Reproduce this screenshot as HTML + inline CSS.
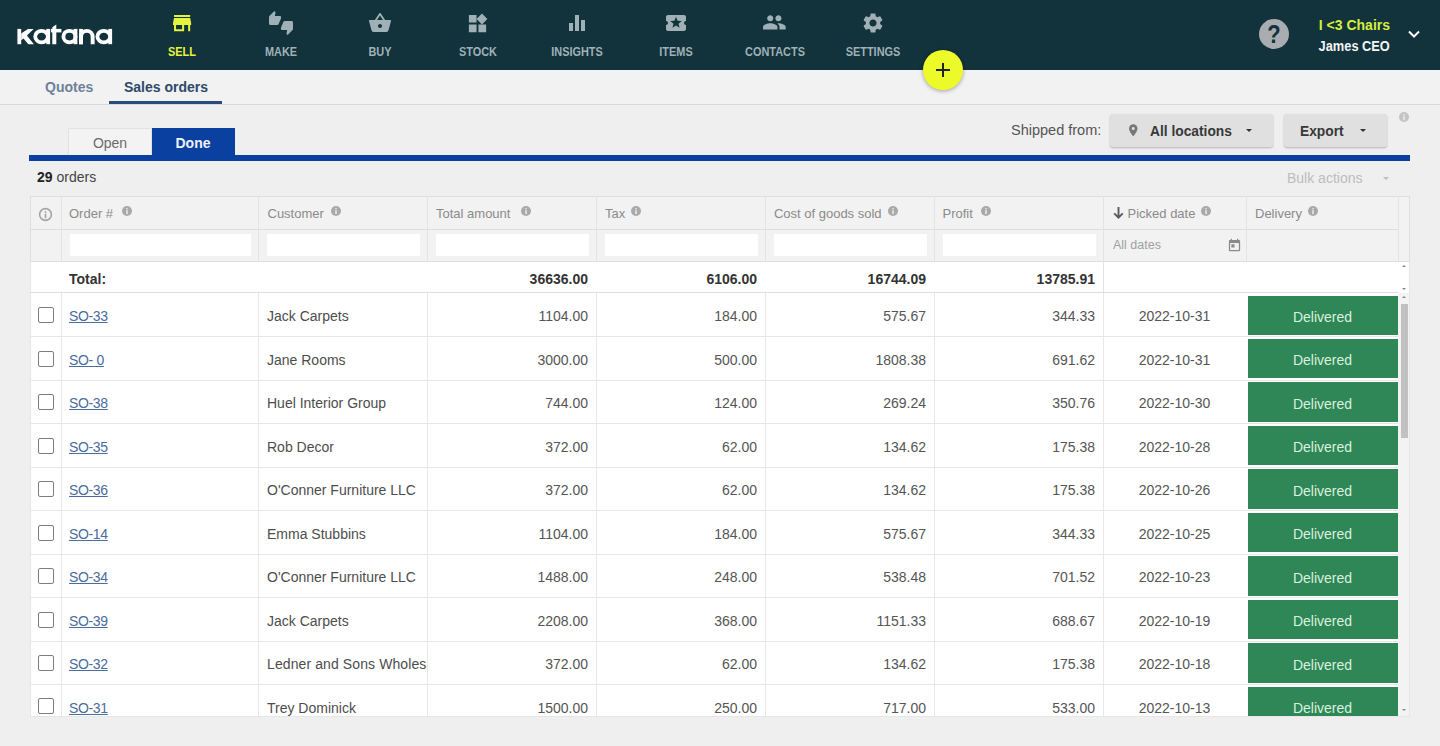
<!DOCTYPE html><html><head><meta charset="utf-8"><style>
*{box-sizing:border-box;margin:0;padding:0}
html,body{width:1440px;height:746px;overflow:hidden;background:#efefef;font-family:"Liberation Sans",sans-serif;position:relative}
.a{position:absolute;white-space:nowrap}
.ic{position:absolute;display:block}
#nav{position:absolute;left:0;top:0;width:1440px;height:70px;background:#12323c}
.nl{position:absolute;top:44.5px;font-size:12px;font-weight:bold;color:#9fb1b6;transform:translateX(-50%) scaleX(0.91);line-height:14px}
</style></head><body>

<div id="nav">
<svg class="ic" style="left:0;top:0;width:120px;height:70px" viewBox="0 0 120 70"><g fill="#fff">
<rect x="17.4" y="28.9" width="3.8" height="15.3"/>
<polygon points="21.2,33.6 27.9,28.9 33.6,28.9 26.9,35.4 33.9,44.2 28.3,44.2 23.5,38.4 21.2,40.2"/>
<polygon points="52.3,27.2 56.3,24.4 56.3,44.2 52.3,44.2"/>
<rect x="50.9" y="28.9" width="10.5" height="3.5"/>
<rect x="79.1" y="28.9" width="3.8" height="15.3"/>
<path d="M79.1 44.2V36.65a7.75 7.75 0 0 1 15.5 0V44.2h-3.9V36.65a3.85 3.85 0 0 0 -7.7 0V44.2z"/>
</g><g fill="none" stroke="#fff" stroke-width="3.8">
<ellipse cx="41.55" cy="36.55" rx="6.35" ry="5.75"/>
<ellipse cx="69.45" cy="36.55" rx="6.05" ry="5.75"/>
<ellipse cx="103.8" cy="36.55" rx="6.4" ry="5.75"/>
</g><g fill="#fff">
<rect x="46.3" y="28.9" width="3.8" height="15.3"/>
<rect x="73.6" y="28.9" width="3.8" height="15.3"/>
<rect x="108.3" y="28.9" width="3.8" height="15.3"/>
</g></svg>
<svg class="ic" style="left:169.8px;top:11px;width:24.2px;height:24.2px" viewBox="0 0 24 24"><path fill="#e4f43c" d="M20 4H4v2h16V4zm1 10v-2l-1-5H4l-1 5v2h1v6h10v-6h4v6h2v-6h1zm-9 4H6v-4h6v4z"/></svg>
<div class="a nl" style="left:181.9px;color:#e4f43c">SELL</div>
<svg class="ic" style="left:268.5px;top:11px;width:24px;height:24px" viewBox="0 0 24 24"><path fill="#9fb1b6" d="M12 6c0-.55-.45-1-1-1H5.82l.66-3.18.02-.23c0-.31-.13-.59-.33-.8L5.38 0 .44 4.94C.17 5.21 0 5.590 0 6v6.5c0 .83.67 1.5 1.5 1.5h6.75c.62 0 1.150-.38 1.38-.91l2.26-5.29c.07-.17.11-.36.11-.55V6zm10.5 4h-6.75c-.62 0-1.15.38-1.38.91l-2.26 5.29c-.07.17-.11.36-.11.55V18c0 .55.45 1 1 1h5.18l-.66 3.18-.02.24c0 .31.13.59.33.8l.79.78 4.94-4.94c.27-.27.44-.65.44-1.06v-6.5c0-.83-.67-1.5-1.5-1.5z"/></svg>
<div class="a nl" style="left:280.6px;color:#9fb1b6">MAKE</div>
<svg class="ic" style="left:367.5px;top:11px;width:24px;height:24px" viewBox="0 0 24 24"><path fill="#9fb1b6" d="M17.21 9l-4.38-6.56c-.19-.28-.51-.42-.83-.42-.32 0-.64.14-.83.43L6.79 9H2c-.55 0-1 .45-1 1 0 .09.01.18.04.27l2.54 9.27c.23.84 1 1.46 1.920 1.46h13c.92 0 1.69-.62 1.93-1.46l2.54-9.27L23 10c0-.55-.45-1-1-1h-4.79zM9 9l3-4.4L15 9H9zm3 8c-1.1 0-2-.9-2-2s.9-2 2-2 2 .9 2 2-.9 2-2 2z"/></svg>
<div class="a nl" style="left:379.5px;color:#9fb1b6">BUY</div>
<svg class="ic" style="left:466px;top:12.4px;width:23px;height:23px" viewBox="0 0 24 24"><path fill="#9fb1b6" d="M13 13v8h8v-8h-8zM3 21h8v-8H3v8zM3 3v8h8V3H3zm13.66-1.31L11 7.34 16.66 13l5.65-5.65-5.65-5.66z"/></svg>
<div class="a nl" style="left:478.2px;color:#9fb1b6">STOCK</div>
<div class="a" style="left:569px;top:22.7px;width:4px;height:8.2px;background:#9fb1b6"></div>
<div class="a" style="left:575px;top:15px;width:4.2px;height:15.9px;background:#9fb1b6"></div>
<div class="a" style="left:581px;top:19.9px;width:4px;height:11px;background:#9fb1b6"></div>
<div class="a nl" style="left:576.7px;color:#9fb1b6">INSIGHTS</div>
<svg class="ic" style="left:663.7px;top:11px;width:24px;height:24px" viewBox="0 0 24 24"><path fill="#9fb1b6" d="M20 12c0-1.1.9-2 2-2V6c0-1.1-.9-2-2-2H4c-1.1 0-1.99.9-1.99 2v4c1.1 0 1.99.9 1.99 2s-.89 2-2 2v4c0 1.1.9 2 2 2h16c1.1 0 2-.9 2-2v-4c-1.1 0-2-.9-2-2zm-4.42 4.8L12 14.5l-3.58 2.3 1.08-4.12-3.29-2.690 4.24-.25L12 5.8l1.54 3.950 4.24.25-3.29 2.690 1.09 4.110z"/></svg>
<div class="a nl" style="left:675.6px;color:#9fb1b6">ITEMS</div>
<svg class="ic" style="left:761.9px;top:10.3px;width:24.7px;height:24.7px" viewBox="0 0 24 24"><path fill="#9fb1b6" d="M16 11c1.66 0 2.99-1.34 2.99-3S17.66 5 16 5c-1.66 0-3 1.34-3 3s1.34 3 3 3zm-8 0c1.66 0 2.99-1.34 2.99-3S9.66 5 8 5C6.34 5 5 6.34 5 8s1.34 3 3 3zm0 2c-2.33 0-7 1.17-7 3.5V19h14v-2.5c0-2.33-4.67-3.5-7-3.5zm8 0c-.29 0-.62.02-.97.05 1.16.84 1.97 1.97 1.97 3.45V19h6v-2.5c0-2.33-4.67-3.5-7-3.5z"/></svg>
<div class="a nl" style="left:774.5px;color:#9fb1b6">CONTACTS</div>
<svg class="ic" style="left:861px;top:10.6px;width:24px;height:24px" viewBox="0 0 24 24"><path fill="#9fb1b6" d="M19.14 12.94c.04-.3.06-.61.06-.94 0-.32-.02-.64-.07-.94l2.03-1.58c.18-.14.23-.41.12-.61l-1.92-3.32c-.12-.22-.37-.29-.59-.22l-2.39.96c-.5-.38-1.03-.7-1.62-.94l-.36-2.54c-.04-.24-.24-.41-.48-.41h-3.84c-.24 0-.43.17-.47.41l-.36 2.54c-.59.24-1.13.57-1.62.94l-2.39-.96c-.22-.08-.47 0-.59.22L2.74 8.87c-.12.21-.08.47.12.61l2.03 1.58c-.05.3-.09.63-.09.94s.02.64.07.94l-2.030 1.58c-.18.14-.23.41-.12.61l1.92 3.32c.12.22.37.29.59.22l2.39-.96c.5.38 1.03.7 1.62.94l.36 2.54c.05.24.24.41.48.41h3.84c.24 0 .44-.17.47-.41l.36-2.54c.59-.24 1.13-.56 1.62-.94l2.39.96c.22.08.47 0 .59-.22l1.92-3.32c.12-.22.07-.47-.12-.61l-2.01-1.58zM12 15.6c-1.98 0-3.6-1.62-3.6-3.6s1.62-3.6 3.6-3.6 3.6 1.62 3.6 3.6-1.62 3.6-3.6 3.6z"/></svg>
<div class="a nl" style="left:872.75px;color:#9fb1b6">SETTINGS</div>
<div class="a" style="left:1259px;top:19px;width:30px;height:30px;border-radius:50%;background:#a9acb0"></div>
<div class="a" style="left:1259px;top:19px;width:30px;height:30px;text-align:center;font-size:26px;font-weight:bold;line-height:31px;color:#12323c;transform:scaleX(0.84)">?</div>
<div class="a" style="right:50px;top:16px;font-size:14px;font-weight:bold;color:#d7ee3e;line-height:18px;text-align:right">I &lt;3 Chairs</div>
<div class="a" style="right:50px;top:37px;font-size:14px;font-weight:bold;color:#f2f5f5;line-height:18px;text-align:right;transform:scaleX(0.915);transform-origin:100% 50%">James CEO</div>
<svg class="ic" style="left:1406px;top:28px;width:16px;height:12px" viewBox="0 0 16 12"><path d="M3 3.5L8 8.5L13 3.5" fill="none" stroke="#fff" stroke-width="2"/></svg>
</div>
<div class="a" style="left:0;top:70px;width:1440px;height:35px;background:#f2f2f2;border-bottom:1px solid #d9d9d9"></div>
<div class="a" style="left:45px;top:78px;font-size:14px;font-weight:bold;color:#6d8199;line-height:18px">Quotes</div>
<div class="a" style="left:124px;top:78px;font-size:14px;font-weight:bold;color:#2d4869;line-height:18px">Sales orders</div>
<div class="a" style="left:109px;top:101px;width:113px;height:2.5px;background:#2b4a7e"></div>
<div class="a" style="left:922.5px;top:50px;width:40px;height:40px;border-radius:50%;background:#ecfa2a;box-shadow:0 1px 4px rgba(0,0,0,.35)"></div>
<div class="a" style="left:936px;top:69.2px;width:14px;height:1.8px;background:#222"></div>
<div class="a" style="left:942.1px;top:63.3px;width:1.8px;height:14px;background:#222"></div>
<div class="a" style="left:68px;top:128px;width:84px;height:27px;background:#f3f3f3;border:1px solid #e2e2e2;border-bottom:none"></div>
<div class="a" style="left:68px;top:134px;width:84px;text-align:center;font-size:14px;color:#6b6b6b;line-height:18px">Open</div>
<div class="a" style="left:151.5px;top:128px;width:83px;height:27px;background:#0a40a0"></div>
<div class="a" style="left:151.5px;top:134px;width:83px;text-align:center;font-size:14px;font-weight:bold;color:#eef2fa;line-height:18px">Done</div>
<div class="a" style="left:29px;top:155px;width:1381px;height:5.5px;background:#0a40a0"></div>
<div class="a" style="left:1011px;top:121px;font-size:14.5px;color:#555;line-height:18px">Shipped from:</div>
<div class="a" style="left:1110px;top:114px;width:163px;height:33px;background:#e0e0e0;border-radius:3px;box-shadow:0 1px 2px rgba(0,0,0,.25)"></div>
<svg class="ic" style="left:1126px;top:122.5px;width:14.5px;height:14.5px" viewBox="0 0 24 24"><path fill="#777" d="M12 2C8.13 2 5 5.13 5 9c0 5.25 7 13 7 13s7-7.75 7-13c0-3.87-3.13-7-7-7zm0 9.5c-1.38 0-2.5-1.12-2.5-2.5s1.12-2.5 2.5-2.5 2.5 1.12 2.5 2.5-1.12 2.5-2.5 2.5z"/></svg>
<div class="a" style="left:1150px;top:122px;font-size:14.5px;font-weight:bold;color:#383838;line-height:18px;transform:scaleX(0.95);transform-origin:0 50%">All locations</div>
<div class="a" style="left:1245.5px;top:128.5px;width:0;height:0;border-left:3.5px solid transparent;border-right:3.5px solid transparent;border-top:3.5px solid #333"></div>
<div class="a" style="left:1284px;top:114px;width:103px;height:33px;background:#e0e0e0;border-radius:3px;box-shadow:0 1px 2px rgba(0,0,0,.25)"></div>
<div class="a" style="left:1300px;top:122px;font-size:14.5px;font-weight:bold;color:#383838;line-height:18px;transform:scaleX(0.95);transform-origin:0 50%">Export</div>
<div class="a" style="left:1359.5px;top:128.5px;width:0;height:0;border-left:3.5px solid transparent;border-right:3.5px solid transparent;border-top:3.5px solid #333"></div>
<svg class="ic" style="left:1399px;top:111.5px;width:10px;height:10px" viewBox="0 0 10 10"><circle cx="5" cy="5" r="5" fill="#c4c4c4"/><circle cx="5" cy="2.8" r="0.8" fill="#f0f0f0"/><rect x="4.3" y="4.2" width="1.4" height="3.9" fill="#f0f0f0"/></svg>
<div class="a" style="left:37px;top:168px;font-size:14px;color:#444;line-height:18px"><b style="color:#222">29</b> orders</div>
<div class="a" style="left:1287px;top:169px;font-size:14px;color:#bdbdbd;line-height:18px">Bulk actions</div>
<div class="a" style="left:1383px;top:177px;width:0;height:0;border-left:3.5px solid transparent;border-right:3.5px solid transparent;border-top:3.5px solid #bdbdbd"></div>
<div class="a" style="left:30px;top:196px;width:1380px;height:520.5px;background:#fff;border:1px solid #e6e6e6"></div>
<div class="a" style="left:30px;top:196px;width:1380px;height:65px;background:#f2f2f2;border:1px solid #dedede;border-bottom:none"></div>
<div class="a" style="left:30px;top:229px;width:1368px;height:1px;background:#dedede"></div>
<div class="a" style="left:30px;top:260.5px;width:1380px;height:1.5px;background:#dedede"></div>
<div class="a" style="left:30px;top:292px;width:1368px;height:1px;background:#dedede"></div>
<div class="a" style="left:60.5px;top:196px;width:1px;height:65px;background:#e3e3e3"></div>
<div class="a" style="left:257.5px;top:196px;width:1px;height:65px;background:#e3e3e3"></div>
<div class="a" style="left:426.5px;top:196px;width:1px;height:65px;background:#e3e3e3"></div>
<div class="a" style="left:595.5px;top:196px;width:1px;height:65px;background:#e3e3e3"></div>
<div class="a" style="left:764.5px;top:196px;width:1px;height:65px;background:#e3e3e3"></div>
<div class="a" style="left:933.5px;top:196px;width:1px;height:65px;background:#e3e3e3"></div>
<div class="a" style="left:1102.5px;top:196px;width:1px;height:65px;background:#e3e3e3"></div>
<div class="a" style="left:1245.5px;top:196px;width:1px;height:65px;background:#e3e3e3"></div>
<div class="a" style="left:1397.5px;top:196px;width:1px;height:65px;background:#e3e3e3"></div>
<svg class="ic" style="left:38px;top:207px;width:15px;height:15px" viewBox="0 0 15 15"><circle cx="7.5" cy="7.5" r="5.9" fill="none" stroke="#a5a5a5" stroke-width="1.6"/><circle cx="7.5" cy="4.9" r="0.95" fill="#a5a5a5"/><rect x="6.7" y="6.6" width="1.6" height="4.6" fill="#a5a5a5"/></svg>
<div class="a" style="left:69px;top:204.5px;font-size:13px;color:#8a8a8a;line-height:17px">Order #</div>
<svg class="ic" style="left:121.9px;top:205.5px;width:10px;height:10px" viewBox="0 0 10 10"><circle cx="5" cy="5" r="5" fill="#a9a9a9"/><circle cx="5" cy="2.8" r="0.8" fill="#f2f2f2"/><rect x="4.3" y="4.2" width="1.4" height="3.9" fill="#f2f2f2"/></svg>
<div class="a" style="left:267.5px;top:204.5px;font-size:13px;color:#8a8a8a;line-height:17px">Customer</div>
<svg class="ic" style="left:330.5px;top:205.5px;width:10px;height:10px" viewBox="0 0 10 10"><circle cx="5" cy="5" r="5" fill="#a9a9a9"/><circle cx="5" cy="2.8" r="0.8" fill="#f2f2f2"/><rect x="4.3" y="4.2" width="1.4" height="3.9" fill="#f2f2f2"/></svg>
<div class="a" style="left:436px;top:204.5px;font-size:13px;color:#8a8a8a;line-height:17px">Total amount</div>
<svg class="ic" style="left:520.8px;top:205.5px;width:10px;height:10px" viewBox="0 0 10 10"><circle cx="5" cy="5" r="5" fill="#a9a9a9"/><circle cx="5" cy="2.8" r="0.8" fill="#f2f2f2"/><rect x="4.3" y="4.2" width="1.4" height="3.9" fill="#f2f2f2"/></svg>
<div class="a" style="left:605px;top:204.5px;font-size:13px;color:#8a8a8a;line-height:17px">Tax</div>
<svg class="ic" style="left:630.5px;top:205.5px;width:10px;height:10px" viewBox="0 0 10 10"><circle cx="5" cy="5" r="5" fill="#a9a9a9"/><circle cx="5" cy="2.8" r="0.8" fill="#f2f2f2"/><rect x="4.3" y="4.2" width="1.4" height="3.9" fill="#f2f2f2"/></svg>
<div class="a" style="left:773.9px;top:204.5px;font-size:13px;color:#8a8a8a;line-height:17px">Cost of goods sold</div>
<svg class="ic" style="left:888.4px;top:205.5px;width:10px;height:10px" viewBox="0 0 10 10"><circle cx="5" cy="5" r="5" fill="#a9a9a9"/><circle cx="5" cy="2.8" r="0.8" fill="#f2f2f2"/><rect x="4.3" y="4.2" width="1.4" height="3.9" fill="#f2f2f2"/></svg>
<div class="a" style="left:942.5px;top:204.5px;font-size:13px;color:#8a8a8a;line-height:17px">Profit</div>
<svg class="ic" style="left:980.5px;top:205.5px;width:10px;height:10px" viewBox="0 0 10 10"><circle cx="5" cy="5" r="5" fill="#a9a9a9"/><circle cx="5" cy="2.8" r="0.8" fill="#f2f2f2"/><rect x="4.3" y="4.2" width="1.4" height="3.9" fill="#f2f2f2"/></svg>
<div class="a" style="left:1127.5px;top:204.5px;font-size:13px;color:#8a8a8a;line-height:17px">Picked date</div>
<svg class="ic" style="left:1201px;top:205.5px;width:10px;height:10px" viewBox="0 0 10 10"><circle cx="5" cy="5" r="5" fill="#a9a9a9"/><circle cx="5" cy="2.8" r="0.8" fill="#f2f2f2"/><rect x="4.3" y="4.2" width="1.4" height="3.9" fill="#f2f2f2"/></svg>
<div class="a" style="left:1255px;top:204.5px;font-size:13px;color:#8a8a8a;line-height:17px">Delivery</div>
<svg class="ic" style="left:1307.5px;top:205.5px;width:10px;height:10px" viewBox="0 0 10 10"><circle cx="5" cy="5" r="5" fill="#a9a9a9"/><circle cx="5" cy="2.8" r="0.8" fill="#f2f2f2"/><rect x="4.3" y="4.2" width="1.4" height="3.9" fill="#f2f2f2"/></svg>
<svg class="ic" style="left:1113px;top:206px;width:11px;height:13px" viewBox="0 0 11 13"><path d="M5.5 1V11.5M1.2 7.3L5.5 11.6L9.8 7.3" fill="none" stroke="#5a5a5a" stroke-width="1.9"/></svg>
<div class="a" style="left:69.5px;top:234px;width:181px;height:22px;background:#fff"></div>
<div class="a" style="left:266.5px;top:234px;width:153px;height:22px;background:#fff"></div>
<div class="a" style="left:435.5px;top:234px;width:153px;height:22px;background:#fff"></div>
<div class="a" style="left:604.5px;top:234px;width:153px;height:22px;background:#fff"></div>
<div class="a" style="left:773.5px;top:234px;width:153px;height:22px;background:#fff"></div>
<div class="a" style="left:942.5px;top:234px;width:153px;height:22px;background:#fff"></div>
<div class="a" style="left:1113px;top:237px;font-size:12.5px;color:#a0a0a0;line-height:17px">All dates</div>
<svg class="ic" style="left:1227px;top:237.5px;width:15px;height:15px" viewBox="0 0 24 24"><path fill="#8a8a8a" d="M19 3h-1V1h-2v2H8V1H6v2H5c-1.11 0-1.99.9-1.99 2L3 19c0 1.1.89 2 2 2h14c1.1 0 2-.9 2-2V5c0-1.1-.9-2-2-2zm0 16H5V8h14v11zM7 10h5v5H7z"/></svg>
<div class="a" style="left:1102.5px;top:261px;width:1px;height:31px;background:#e3e3e3"></div>
<div class="a" style="left:69px;top:270px;font-size:14px;font-weight:bold;color:#333;line-height:18px">Total:</div>
<div class="a" style="right:852px;top:270px;font-size:14px;font-weight:bold;color:#333;line-height:18px;text-align:right">36636.00</div>
<div class="a" style="right:683px;top:270px;font-size:14px;font-weight:bold;color:#333;line-height:18px;text-align:right">6106.00</div>
<div class="a" style="right:514px;top:270px;font-size:14px;font-weight:bold;color:#333;line-height:18px;text-align:right">16744.09</div>
<div class="a" style="right:345px;top:270px;font-size:14px;font-weight:bold;color:#333;line-height:18px;text-align:right">13785.91</div>
<div class="a" style="left:1402px;top:265px;width:0;height:0;border-left:2px solid transparent;border-right:2px solid transparent;border-bottom:2.5px solid #888"></div>
<div class="a" style="left:1402px;top:287.5px;width:0;height:0;border-left:2px solid transparent;border-right:2px solid transparent;border-top:2.5px solid #888"></div>
<div class="a" style="left:1398px;top:293.0px;width:11px;height:422.5px;background:#f3f3f3"></div>
<div class="a" style="left:1400.5px;top:303.7px;width:7.8px;height:134.5px;background:#c1c1c1"></div>
<div class="a" style="left:1402px;top:295.5px;width:0;height:0;border-left:2px solid transparent;border-right:2px solid transparent;border-bottom:2.5px solid #888"></div>
<div class="a" style="left:1402px;top:708.5px;width:0;height:0;border-left:2px solid transparent;border-right:2px solid transparent;border-top:2.5px solid #888"></div>
<div id="body" class="a" style="left:31px;top:293.0px;width:1367px;height:422.5px;overflow:hidden">
<div class="a" style="left:0;top:43.410000000000004px;width:1367px;height:1px;background:#e6e6e6"></div>
<div class="a" style="left:29.5px;top:0.45px;width:1px;height:43.46px;background:#e8e8e8"></div>
<div class="a" style="left:226.5px;top:0.45px;width:1px;height:43.46px;background:#e8e8e8"></div>
<div class="a" style="left:395.5px;top:0.45px;width:1px;height:43.46px;background:#e8e8e8"></div>
<div class="a" style="left:564.5px;top:0.45px;width:1px;height:43.46px;background:#e8e8e8"></div>
<div class="a" style="left:733.5px;top:0.45px;width:1px;height:43.46px;background:#e8e8e8"></div>
<div class="a" style="left:902.5px;top:0.45px;width:1px;height:43.46px;background:#e8e8e8"></div>
<div class="a" style="left:1071.5px;top:0.45px;width:1px;height:43.46px;background:#e8e8e8"></div>
<div class="a" style="left:7px;top:14.35px;width:16px;height:16px;border:1.9px solid #7d7d7d;border-radius:2px"></div>
<div class="a" style="left:38px;top:14.45px;font-size:14px;color:#4b6c9c;text-decoration:underline;line-height:18px;letter-spacing:-0.35px">SO-33</div>
<div class="a" style="left:236px;top:14.45px;width:160px;overflow:hidden;font-size:14px;color:#4d4d4d;line-height:18px;">Jack Carpets</div>
<div class="a" style="right:810px;top:14.45px;font-size:14px;color:#555;line-height:18px;text-align:right">1104.00</div>
<div class="a" style="right:641px;top:14.45px;font-size:14px;color:#555;line-height:18px;text-align:right">184.00</div>
<div class="a" style="right:472px;top:14.45px;font-size:14px;color:#555;line-height:18px;text-align:right">575.67</div>
<div class="a" style="right:303px;top:14.45px;font-size:14px;color:#555;line-height:18px;text-align:right">344.33</div>
<div class="a" style="left:1072px;top:14.45px;width:143px;text-align:center;font-size:14px;color:#555;line-height:18px">2022-10-31</div>
<div class="a" style="left:1216.5px;top:2.5500000000000003px;width:150px;height:39.4px;background:#2f8657"></div>
<div class="a" style="left:1216.5px;top:14.95px;width:150px;text-align:center;font-size:14px;color:#d9f2df;line-height:18px">Delivered</div>
<div class="a" style="left:0;top:86.87px;width:1367px;height:1px;background:#e6e6e6"></div>
<div class="a" style="left:29.5px;top:43.910000000000004px;width:1px;height:43.46px;background:#e8e8e8"></div>
<div class="a" style="left:226.5px;top:43.910000000000004px;width:1px;height:43.46px;background:#e8e8e8"></div>
<div class="a" style="left:395.5px;top:43.910000000000004px;width:1px;height:43.46px;background:#e8e8e8"></div>
<div class="a" style="left:564.5px;top:43.910000000000004px;width:1px;height:43.46px;background:#e8e8e8"></div>
<div class="a" style="left:733.5px;top:43.910000000000004px;width:1px;height:43.46px;background:#e8e8e8"></div>
<div class="a" style="left:902.5px;top:43.910000000000004px;width:1px;height:43.46px;background:#e8e8e8"></div>
<div class="a" style="left:1071.5px;top:43.910000000000004px;width:1px;height:43.46px;background:#e8e8e8"></div>
<div class="a" style="left:7px;top:57.81px;width:16px;height:16px;border:1.9px solid #7d7d7d;border-radius:2px"></div>
<div class="a" style="left:38px;top:57.910000000000004px;font-size:14px;color:#4b6c9c;text-decoration:underline;line-height:18px;letter-spacing:-0.35px">SO- 0</div>
<div class="a" style="left:236px;top:57.910000000000004px;width:160px;overflow:hidden;font-size:14px;color:#4d4d4d;line-height:18px;">Jane Rooms</div>
<div class="a" style="right:810px;top:57.910000000000004px;font-size:14px;color:#555;line-height:18px;text-align:right">3000.00</div>
<div class="a" style="right:641px;top:57.910000000000004px;font-size:14px;color:#555;line-height:18px;text-align:right">500.00</div>
<div class="a" style="right:472px;top:57.910000000000004px;font-size:14px;color:#555;line-height:18px;text-align:right">1808.38</div>
<div class="a" style="right:303px;top:57.910000000000004px;font-size:14px;color:#555;line-height:18px;text-align:right">691.62</div>
<div class="a" style="left:1072px;top:57.910000000000004px;width:143px;text-align:center;font-size:14px;color:#555;line-height:18px">2022-10-31</div>
<div class="a" style="left:1216.5px;top:46.010000000000005px;width:150px;height:39.4px;background:#2f8657"></div>
<div class="a" style="left:1216.5px;top:58.410000000000004px;width:150px;text-align:center;font-size:14px;color:#d9f2df;line-height:18px">Delivered</div>
<div class="a" style="left:0;top:130.33px;width:1367px;height:1px;background:#e6e6e6"></div>
<div class="a" style="left:29.5px;top:87.37px;width:1px;height:43.46px;background:#e8e8e8"></div>
<div class="a" style="left:226.5px;top:87.37px;width:1px;height:43.46px;background:#e8e8e8"></div>
<div class="a" style="left:395.5px;top:87.37px;width:1px;height:43.46px;background:#e8e8e8"></div>
<div class="a" style="left:564.5px;top:87.37px;width:1px;height:43.46px;background:#e8e8e8"></div>
<div class="a" style="left:733.5px;top:87.37px;width:1px;height:43.46px;background:#e8e8e8"></div>
<div class="a" style="left:902.5px;top:87.37px;width:1px;height:43.46px;background:#e8e8e8"></div>
<div class="a" style="left:1071.5px;top:87.37px;width:1px;height:43.46px;background:#e8e8e8"></div>
<div class="a" style="left:7px;top:101.27000000000001px;width:16px;height:16px;border:1.9px solid #7d7d7d;border-radius:2px"></div>
<div class="a" style="left:38px;top:101.37px;font-size:14px;color:#4b6c9c;text-decoration:underline;line-height:18px;letter-spacing:-0.35px">SO-38</div>
<div class="a" style="left:236px;top:101.37px;width:160px;overflow:hidden;font-size:14px;color:#4d4d4d;line-height:18px;">Huel Interior Group</div>
<div class="a" style="right:810px;top:101.37px;font-size:14px;color:#555;line-height:18px;text-align:right">744.00</div>
<div class="a" style="right:641px;top:101.37px;font-size:14px;color:#555;line-height:18px;text-align:right">124.00</div>
<div class="a" style="right:472px;top:101.37px;font-size:14px;color:#555;line-height:18px;text-align:right">269.24</div>
<div class="a" style="right:303px;top:101.37px;font-size:14px;color:#555;line-height:18px;text-align:right">350.76</div>
<div class="a" style="left:1072px;top:101.37px;width:143px;text-align:center;font-size:14px;color:#555;line-height:18px">2022-10-30</div>
<div class="a" style="left:1216.5px;top:89.47px;width:150px;height:39.4px;background:#2f8657"></div>
<div class="a" style="left:1216.5px;top:101.87px;width:150px;text-align:center;font-size:14px;color:#d9f2df;line-height:18px">Delivered</div>
<div class="a" style="left:0;top:173.79px;width:1367px;height:1px;background:#e6e6e6"></div>
<div class="a" style="left:29.5px;top:130.82999999999998px;width:1px;height:43.46px;background:#e8e8e8"></div>
<div class="a" style="left:226.5px;top:130.82999999999998px;width:1px;height:43.46px;background:#e8e8e8"></div>
<div class="a" style="left:395.5px;top:130.82999999999998px;width:1px;height:43.46px;background:#e8e8e8"></div>
<div class="a" style="left:564.5px;top:130.82999999999998px;width:1px;height:43.46px;background:#e8e8e8"></div>
<div class="a" style="left:733.5px;top:130.82999999999998px;width:1px;height:43.46px;background:#e8e8e8"></div>
<div class="a" style="left:902.5px;top:130.82999999999998px;width:1px;height:43.46px;background:#e8e8e8"></div>
<div class="a" style="left:1071.5px;top:130.82999999999998px;width:1px;height:43.46px;background:#e8e8e8"></div>
<div class="a" style="left:7px;top:144.73px;width:16px;height:16px;border:1.9px solid #7d7d7d;border-radius:2px"></div>
<div class="a" style="left:38px;top:144.82999999999998px;font-size:14px;color:#4b6c9c;text-decoration:underline;line-height:18px;letter-spacing:-0.35px">SO-35</div>
<div class="a" style="left:236px;top:144.82999999999998px;width:160px;overflow:hidden;font-size:14px;color:#4d4d4d;line-height:18px;">Rob Decor</div>
<div class="a" style="right:810px;top:144.82999999999998px;font-size:14px;color:#555;line-height:18px;text-align:right">372.00</div>
<div class="a" style="right:641px;top:144.82999999999998px;font-size:14px;color:#555;line-height:18px;text-align:right">62.00</div>
<div class="a" style="right:472px;top:144.82999999999998px;font-size:14px;color:#555;line-height:18px;text-align:right">134.62</div>
<div class="a" style="right:303px;top:144.82999999999998px;font-size:14px;color:#555;line-height:18px;text-align:right">175.38</div>
<div class="a" style="left:1072px;top:144.82999999999998px;width:143px;text-align:center;font-size:14px;color:#555;line-height:18px">2022-10-28</div>
<div class="a" style="left:1216.5px;top:132.92999999999998px;width:150px;height:39.4px;background:#2f8657"></div>
<div class="a" style="left:1216.5px;top:145.32999999999998px;width:150px;text-align:center;font-size:14px;color:#d9f2df;line-height:18px">Delivered</div>
<div class="a" style="left:0;top:217.25px;width:1367px;height:1px;background:#e6e6e6"></div>
<div class="a" style="left:29.5px;top:174.29px;width:1px;height:43.46px;background:#e8e8e8"></div>
<div class="a" style="left:226.5px;top:174.29px;width:1px;height:43.46px;background:#e8e8e8"></div>
<div class="a" style="left:395.5px;top:174.29px;width:1px;height:43.46px;background:#e8e8e8"></div>
<div class="a" style="left:564.5px;top:174.29px;width:1px;height:43.46px;background:#e8e8e8"></div>
<div class="a" style="left:733.5px;top:174.29px;width:1px;height:43.46px;background:#e8e8e8"></div>
<div class="a" style="left:902.5px;top:174.29px;width:1px;height:43.46px;background:#e8e8e8"></div>
<div class="a" style="left:1071.5px;top:174.29px;width:1px;height:43.46px;background:#e8e8e8"></div>
<div class="a" style="left:7px;top:188.19px;width:16px;height:16px;border:1.9px solid #7d7d7d;border-radius:2px"></div>
<div class="a" style="left:38px;top:188.29px;font-size:14px;color:#4b6c9c;text-decoration:underline;line-height:18px;letter-spacing:-0.35px">SO-36</div>
<div class="a" style="left:236px;top:188.29px;width:160px;overflow:hidden;font-size:14px;color:#4d4d4d;line-height:18px;">O'Conner Furniture LLC</div>
<div class="a" style="right:810px;top:188.29px;font-size:14px;color:#555;line-height:18px;text-align:right">372.00</div>
<div class="a" style="right:641px;top:188.29px;font-size:14px;color:#555;line-height:18px;text-align:right">62.00</div>
<div class="a" style="right:472px;top:188.29px;font-size:14px;color:#555;line-height:18px;text-align:right">134.62</div>
<div class="a" style="right:303px;top:188.29px;font-size:14px;color:#555;line-height:18px;text-align:right">175.38</div>
<div class="a" style="left:1072px;top:188.29px;width:143px;text-align:center;font-size:14px;color:#555;line-height:18px">2022-10-26</div>
<div class="a" style="left:1216.5px;top:176.39px;width:150px;height:39.4px;background:#2f8657"></div>
<div class="a" style="left:1216.5px;top:188.79px;width:150px;text-align:center;font-size:14px;color:#d9f2df;line-height:18px">Delivered</div>
<div class="a" style="left:0;top:260.71px;width:1367px;height:1px;background:#e6e6e6"></div>
<div class="a" style="left:29.5px;top:217.75px;width:1px;height:43.46px;background:#e8e8e8"></div>
<div class="a" style="left:226.5px;top:217.75px;width:1px;height:43.46px;background:#e8e8e8"></div>
<div class="a" style="left:395.5px;top:217.75px;width:1px;height:43.46px;background:#e8e8e8"></div>
<div class="a" style="left:564.5px;top:217.75px;width:1px;height:43.46px;background:#e8e8e8"></div>
<div class="a" style="left:733.5px;top:217.75px;width:1px;height:43.46px;background:#e8e8e8"></div>
<div class="a" style="left:902.5px;top:217.75px;width:1px;height:43.46px;background:#e8e8e8"></div>
<div class="a" style="left:1071.5px;top:217.75px;width:1px;height:43.46px;background:#e8e8e8"></div>
<div class="a" style="left:7px;top:231.65px;width:16px;height:16px;border:1.9px solid #7d7d7d;border-radius:2px"></div>
<div class="a" style="left:38px;top:231.75px;font-size:14px;color:#4b6c9c;text-decoration:underline;line-height:18px;letter-spacing:-0.35px">SO-14</div>
<div class="a" style="left:236px;top:231.75px;width:160px;overflow:hidden;font-size:14px;color:#4d4d4d;line-height:18px;">Emma Stubbins</div>
<div class="a" style="right:810px;top:231.75px;font-size:14px;color:#555;line-height:18px;text-align:right">1104.00</div>
<div class="a" style="right:641px;top:231.75px;font-size:14px;color:#555;line-height:18px;text-align:right">184.00</div>
<div class="a" style="right:472px;top:231.75px;font-size:14px;color:#555;line-height:18px;text-align:right">575.67</div>
<div class="a" style="right:303px;top:231.75px;font-size:14px;color:#555;line-height:18px;text-align:right">344.33</div>
<div class="a" style="left:1072px;top:231.75px;width:143px;text-align:center;font-size:14px;color:#555;line-height:18px">2022-10-25</div>
<div class="a" style="left:1216.5px;top:219.85px;width:150px;height:39.4px;background:#2f8657"></div>
<div class="a" style="left:1216.5px;top:232.25px;width:150px;text-align:center;font-size:14px;color:#d9f2df;line-height:18px">Delivered</div>
<div class="a" style="left:0;top:304.16999999999996px;width:1367px;height:1px;background:#e6e6e6"></div>
<div class="a" style="left:29.5px;top:261.21px;width:1px;height:43.46px;background:#e8e8e8"></div>
<div class="a" style="left:226.5px;top:261.21px;width:1px;height:43.46px;background:#e8e8e8"></div>
<div class="a" style="left:395.5px;top:261.21px;width:1px;height:43.46px;background:#e8e8e8"></div>
<div class="a" style="left:564.5px;top:261.21px;width:1px;height:43.46px;background:#e8e8e8"></div>
<div class="a" style="left:733.5px;top:261.21px;width:1px;height:43.46px;background:#e8e8e8"></div>
<div class="a" style="left:902.5px;top:261.21px;width:1px;height:43.46px;background:#e8e8e8"></div>
<div class="a" style="left:1071.5px;top:261.21px;width:1px;height:43.46px;background:#e8e8e8"></div>
<div class="a" style="left:7px;top:275.10999999999996px;width:16px;height:16px;border:1.9px solid #7d7d7d;border-radius:2px"></div>
<div class="a" style="left:38px;top:275.21px;font-size:14px;color:#4b6c9c;text-decoration:underline;line-height:18px;letter-spacing:-0.35px">SO-34</div>
<div class="a" style="left:236px;top:275.21px;width:160px;overflow:hidden;font-size:14px;color:#4d4d4d;line-height:18px;">O'Conner Furniture LLC</div>
<div class="a" style="right:810px;top:275.21px;font-size:14px;color:#555;line-height:18px;text-align:right">1488.00</div>
<div class="a" style="right:641px;top:275.21px;font-size:14px;color:#555;line-height:18px;text-align:right">248.00</div>
<div class="a" style="right:472px;top:275.21px;font-size:14px;color:#555;line-height:18px;text-align:right">538.48</div>
<div class="a" style="right:303px;top:275.21px;font-size:14px;color:#555;line-height:18px;text-align:right">701.52</div>
<div class="a" style="left:1072px;top:275.21px;width:143px;text-align:center;font-size:14px;color:#555;line-height:18px">2022-10-23</div>
<div class="a" style="left:1216.5px;top:263.31px;width:150px;height:39.4px;background:#2f8657"></div>
<div class="a" style="left:1216.5px;top:275.71px;width:150px;text-align:center;font-size:14px;color:#d9f2df;line-height:18px">Delivered</div>
<div class="a" style="left:0;top:347.63px;width:1367px;height:1px;background:#e6e6e6"></div>
<div class="a" style="left:29.5px;top:304.67px;width:1px;height:43.46px;background:#e8e8e8"></div>
<div class="a" style="left:226.5px;top:304.67px;width:1px;height:43.46px;background:#e8e8e8"></div>
<div class="a" style="left:395.5px;top:304.67px;width:1px;height:43.46px;background:#e8e8e8"></div>
<div class="a" style="left:564.5px;top:304.67px;width:1px;height:43.46px;background:#e8e8e8"></div>
<div class="a" style="left:733.5px;top:304.67px;width:1px;height:43.46px;background:#e8e8e8"></div>
<div class="a" style="left:902.5px;top:304.67px;width:1px;height:43.46px;background:#e8e8e8"></div>
<div class="a" style="left:1071.5px;top:304.67px;width:1px;height:43.46px;background:#e8e8e8"></div>
<div class="a" style="left:7px;top:318.57px;width:16px;height:16px;border:1.9px solid #7d7d7d;border-radius:2px"></div>
<div class="a" style="left:38px;top:318.67px;font-size:14px;color:#4b6c9c;text-decoration:underline;line-height:18px;letter-spacing:-0.35px">SO-39</div>
<div class="a" style="left:236px;top:318.67px;width:160px;overflow:hidden;font-size:14px;color:#4d4d4d;line-height:18px;">Jack Carpets</div>
<div class="a" style="right:810px;top:318.67px;font-size:14px;color:#555;line-height:18px;text-align:right">2208.00</div>
<div class="a" style="right:641px;top:318.67px;font-size:14px;color:#555;line-height:18px;text-align:right">368.00</div>
<div class="a" style="right:472px;top:318.67px;font-size:14px;color:#555;line-height:18px;text-align:right">1151.33</div>
<div class="a" style="right:303px;top:318.67px;font-size:14px;color:#555;line-height:18px;text-align:right">688.67</div>
<div class="a" style="left:1072px;top:318.67px;width:143px;text-align:center;font-size:14px;color:#555;line-height:18px">2022-10-19</div>
<div class="a" style="left:1216.5px;top:306.77000000000004px;width:150px;height:39.4px;background:#2f8657"></div>
<div class="a" style="left:1216.5px;top:319.17px;width:150px;text-align:center;font-size:14px;color:#d9f2df;line-height:18px">Delivered</div>
<div class="a" style="left:0;top:391.09px;width:1367px;height:1px;background:#e6e6e6"></div>
<div class="a" style="left:29.5px;top:348.13px;width:1px;height:43.46px;background:#e8e8e8"></div>
<div class="a" style="left:226.5px;top:348.13px;width:1px;height:43.46px;background:#e8e8e8"></div>
<div class="a" style="left:395.5px;top:348.13px;width:1px;height:43.46px;background:#e8e8e8"></div>
<div class="a" style="left:564.5px;top:348.13px;width:1px;height:43.46px;background:#e8e8e8"></div>
<div class="a" style="left:733.5px;top:348.13px;width:1px;height:43.46px;background:#e8e8e8"></div>
<div class="a" style="left:902.5px;top:348.13px;width:1px;height:43.46px;background:#e8e8e8"></div>
<div class="a" style="left:1071.5px;top:348.13px;width:1px;height:43.46px;background:#e8e8e8"></div>
<div class="a" style="left:7px;top:362.03px;width:16px;height:16px;border:1.9px solid #7d7d7d;border-radius:2px"></div>
<div class="a" style="left:38px;top:362.13px;font-size:14px;color:#4b6c9c;text-decoration:underline;line-height:18px;letter-spacing:-0.35px">SO-32</div>
<div class="a" style="left:236px;top:362.13px;width:160px;overflow:hidden;font-size:14px;color:#4d4d4d;line-height:18px;letter-spacing:0.1px;">Ledner and Sons Wholesale</div>
<div class="a" style="right:810px;top:362.13px;font-size:14px;color:#555;line-height:18px;text-align:right">372.00</div>
<div class="a" style="right:641px;top:362.13px;font-size:14px;color:#555;line-height:18px;text-align:right">62.00</div>
<div class="a" style="right:472px;top:362.13px;font-size:14px;color:#555;line-height:18px;text-align:right">134.62</div>
<div class="a" style="right:303px;top:362.13px;font-size:14px;color:#555;line-height:18px;text-align:right">175.38</div>
<div class="a" style="left:1072px;top:362.13px;width:143px;text-align:center;font-size:14px;color:#555;line-height:18px">2022-10-18</div>
<div class="a" style="left:1216.5px;top:350.23px;width:150px;height:39.4px;background:#2f8657"></div>
<div class="a" style="left:1216.5px;top:362.63px;width:150px;text-align:center;font-size:14px;color:#d9f2df;line-height:18px">Delivered</div>
<div class="a" style="left:0;top:434.54999999999995px;width:1367px;height:1px;background:#e6e6e6"></div>
<div class="a" style="left:29.5px;top:391.59px;width:1px;height:43.46px;background:#e8e8e8"></div>
<div class="a" style="left:226.5px;top:391.59px;width:1px;height:43.46px;background:#e8e8e8"></div>
<div class="a" style="left:395.5px;top:391.59px;width:1px;height:43.46px;background:#e8e8e8"></div>
<div class="a" style="left:564.5px;top:391.59px;width:1px;height:43.46px;background:#e8e8e8"></div>
<div class="a" style="left:733.5px;top:391.59px;width:1px;height:43.46px;background:#e8e8e8"></div>
<div class="a" style="left:902.5px;top:391.59px;width:1px;height:43.46px;background:#e8e8e8"></div>
<div class="a" style="left:1071.5px;top:391.59px;width:1px;height:43.46px;background:#e8e8e8"></div>
<div class="a" style="left:7px;top:405.48999999999995px;width:16px;height:16px;border:1.9px solid #7d7d7d;border-radius:2px"></div>
<div class="a" style="left:38px;top:405.59px;font-size:14px;color:#4b6c9c;text-decoration:underline;line-height:18px;letter-spacing:-0.35px">SO-31</div>
<div class="a" style="left:236px;top:405.59px;width:160px;overflow:hidden;font-size:14px;color:#4d4d4d;line-height:18px;">Trey Dominick</div>
<div class="a" style="right:810px;top:405.59px;font-size:14px;color:#555;line-height:18px;text-align:right">1500.00</div>
<div class="a" style="right:641px;top:405.59px;font-size:14px;color:#555;line-height:18px;text-align:right">250.00</div>
<div class="a" style="right:472px;top:405.59px;font-size:14px;color:#555;line-height:18px;text-align:right">717.00</div>
<div class="a" style="right:303px;top:405.59px;font-size:14px;color:#555;line-height:18px;text-align:right">533.00</div>
<div class="a" style="left:1072px;top:405.59px;width:143px;text-align:center;font-size:14px;color:#555;line-height:18px">2022-10-13</div>
<div class="a" style="left:1216.5px;top:393.69px;width:150px;height:39.4px;background:#2f8657"></div>
<div class="a" style="left:1216.5px;top:406.09px;width:150px;text-align:center;font-size:14px;color:#d9f2df;line-height:18px">Delivered</div>
</div>
</body></html>
